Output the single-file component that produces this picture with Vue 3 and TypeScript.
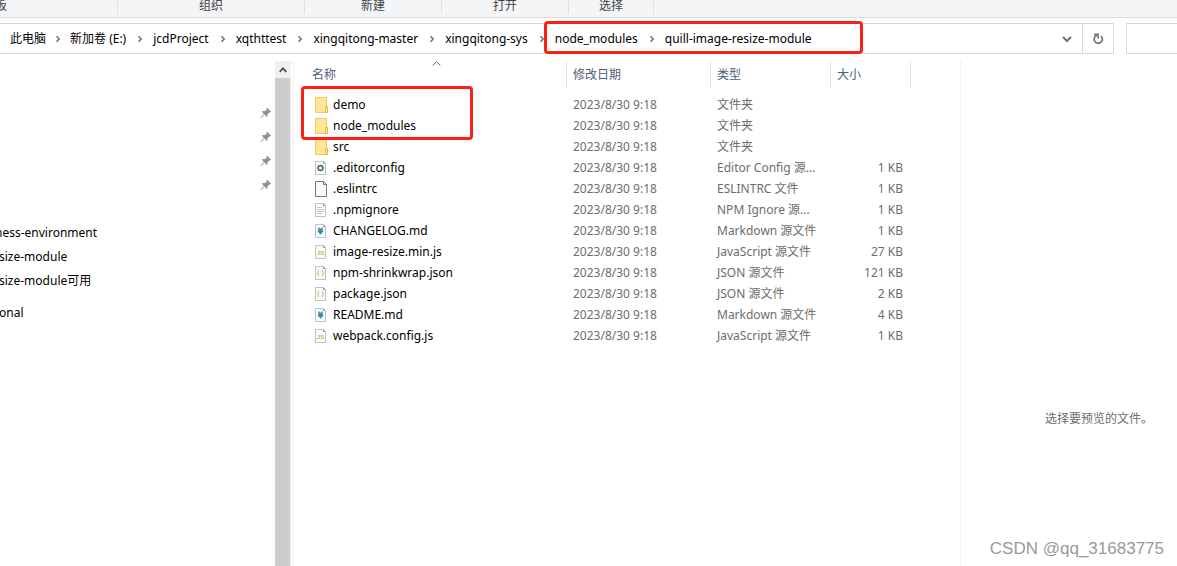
<script setup lang="ts">
type IconKind = 'folder' | 'gear' | 'blank' | 'text' | 'markdown' | 'js' | 'json'

interface FileEntry {
  name: string
  icon: IconKind
  modified: string
  type: string
  size: string
}

const ribbonGroups: string[] = ['板', '组织', '新建', '打开', '选择']

const crumbs: string[] = [
  '此电脑',
  '新加卷 (E:)',
  'jcdProject',
  'xqthttest',
  'xingqitong-master',
  'xingqitong-sys',
  'node_modules',
  'quill-image-resize-module',
]

const pinned: number[] = [1, 2, 3, 4]

const recent: { label: string; cut: string }[] = [
  { label: 'ness-environment', cut: 'cut-wide' },
  { label: 'size-module', cut: 'cut-narrow' },
  { label: 'size-module可用', cut: 'cut-narrow' },
  { label: 'onal', cut: 'cut-narrow spaced' },
]

const date = '2023/8/30 9:18'

const files: FileEntry[] = [
  { name: 'demo', icon: 'folder', modified: date, type: '文件夹', size: '' },
  { name: 'node_modules', icon: 'folder', modified: date, type: '文件夹', size: '' },
  { name: 'src', icon: 'folder', modified: date, type: '文件夹', size: '' },
  { name: '.editorconfig', icon: 'gear', modified: date, type: 'Editor Config 源...', size: '1 KB' },
  { name: '.eslintrc', icon: 'blank', modified: date, type: 'ESLINTRC 文件', size: '1 KB' },
  { name: '.npmignore', icon: 'text', modified: date, type: 'NPM Ignore 源...', size: '1 KB' },
  { name: 'CHANGELOG.md', icon: 'markdown', modified: date, type: 'Markdown 源文件', size: '1 KB' },
  { name: 'image-resize.min.js', icon: 'js', modified: date, type: 'JavaScript 源文件', size: '27 KB' },
  { name: 'npm-shrinkwrap.json', icon: 'json', modified: date, type: 'JSON 源文件', size: '121 KB' },
  { name: 'package.json', icon: 'json', modified: date, type: 'JSON 源文件', size: '2 KB' },
  { name: 'README.md', icon: 'markdown', modified: date, type: 'Markdown 源文件', size: '4 KB' },
  { name: 'webpack.config.js', icon: 'js', modified: date, type: 'JavaScript 源文件', size: '1 KB' },
]
</script>

<template>
  <div class="explorer">
    <div class="ribbon">
      <div v-for="(group, i) in ribbonGroups" :key="group" class="ribbon-group" :class="`group-${i}`">
        {{ group }}
      </div>
    </div>

    <div class="toolbar">
      <div class="address">
        <nav class="crumbs" aria-label="路径">
          <template v-for="(crumb, i) in crumbs" :key="crumb">
            <svg v-if="i > 0" class="crumb-sep" viewBox="0 0 6 8" aria-hidden="true">
              <path d="M1.5 1.3 4.2 4 1.5 6.7" fill="none" stroke="#6f6f6f" stroke-width="1.5" />
            </svg>
            <a href="#" class="crumb">{{ crumb }}</a>
          </template>
        </nav>
        <button class="tool drop" type="button" aria-label="历史位置">
          <svg width="10" height="8" viewBox="0 0 10 8">
            <path d="M1 2 5 6 9 2" fill="none" stroke="#707070" stroke-width="2" />
          </svg>
        </button>
        <button class="tool refresh" type="button" aria-label="刷新">
          <svg width="12" height="12" viewBox="0 0 12 12">
            <path d="M9 3.1A4.1 4.1 0 1 1 3.4 3.2L5.4 1.8" fill="none" stroke="#7a7a7a" stroke-width="1.8" />
            <path d="M2 1.4H6.2V5.4" fill="none" stroke="#7a7a7a" stroke-width="1.6" />
          </svg>
        </button>
      </div>
      <input class="search" type="text" aria-label="搜索" />
      <div class="mark mark-path"></div>
    </div>

    <div class="body">
      <aside class="sidebar">
        <div class="tree">
          <div class="pins">
            <svg v-for="pin in pinned" :key="pin" class="pin" viewBox="0 0 12 12" aria-hidden="true">
              <path
                d="M7.2.8 11.2 4.8 10.2 5.6 9.4 5.3 7.6 7.2C7.8 8.4 7.5 9.2 6.9 9.9L4.6 7.6 1 11.2.6 10.8 3.9 7 1.8 4.8C2.6 4.1 3.7 3.9 4.8 4.2L6.7 2.5 6.4 1.6Z"
                fill="#8794a0"
              />
            </svg>
          </div>
          <a v-for="item in recent" :key="item.label" href="#" class="node" :class="item.cut">{{ item.label }}</a>
        </div>
        <div class="scrollbar">
          <button class="scroll-up" type="button" aria-label="向上滚动">
            <svg width="8" height="8" viewBox="0 0 8 8">
              <path d="M.7 5.8 4 2.4 7.3 5.8" fill="none" stroke="#505050" stroke-width="1.8" />
            </svg>
          </button>
          <div class="thumb"></div>
        </div>
      </aside>

      <main class="listing">
        <table class="files">
          <colgroup>
            <col class="col-name" />
            <col class="col-date" />
            <col class="col-type" />
            <col class="col-size" />
          </colgroup>
          <thead>
            <tr>
              <th scope="col">
                名称
                <svg class="sort" viewBox="0 0 9 5" aria-hidden="true">
                  <path d="M.6 4.5 4.5.7 8.4 4.5" fill="none" stroke="#6a6a6a" />
                </svg>
              </th>
              <th scope="col">修改日期</th>
              <th scope="col">类型</th>
              <th scope="col">大小</th>
            </tr>
          </thead>
          <tbody>
            <tr v-for="file in files" :key="file.name">
              <td class="name">
                <div class="name-cell">
                  <svg class="icon" viewBox="0 0 14 16" aria-hidden="true">
                    <template v-if="file.icon === 'folder'">
                      <path d="M1.5.5H12.5V15.5H1.5Z" fill="#ffe594" stroke="#f0cb60" />
                      <path d="M11.5 9.5H13.5V15.5H11.5Z" fill="#ffe594" stroke="#e6b93f" />
                    </template>
                    <template v-else-if="file.icon === 'blank'">
                      <path d="M1.5.5H9.5L12.5 3.5V15.5H1.5Z" fill="#fafafa" stroke="#777" />
                      <path d="M9.5.5V3.5H12.5" fill="none" stroke="#777" />
                    </template>
                    <template v-else>
                      <path d="M1.5 1.5H9.5L11.5 3.5V14.5H1.5Z" fill="#fafbfb" stroke="#bcc3c6" />
                      <path d="M9 1V4H12Z" fill="#9faaae" />
                      <template v-if="file.icon === 'gear'">
                        <circle cx="6.5" cy="8" r="2.3" fill="none" stroke="#536a75" stroke-width="1.5" />
                        <path
                          d="M6.5 4.4V5.6M6.5 10.4V11.6M2.9 8H4.1M8.9 8H10.1M3.9 5.4 4.8 6.3M8.2 9.7 9.1 10.6M3.9 10.6 4.8 9.7M8.2 6.3 9.1 5.4"
                          stroke="#536a75"
                          stroke-width="1.2"
                        />
                      </template>
                      <path
                        v-else-if="file.icon === 'text'"
                        d="M3 5.5H8M3 7.5H10M3 9.5H10M3 11.5H8"
                        stroke="#c4cacd"
                      />
                      <path
                        v-else-if="file.icon === 'markdown'"
                        d="M4.2 4.6H5.5V5.4H7.5V4.6H8.8V8H9.8L6.5 11.8 3.2 8H4.2Z"
                        fill="#428ba8"
                      />
                      <text v-else-if="file.icon === 'js'" x="6.5" y="10.5" class="glyph">JS</text>
                      <g v-else fill="none" stroke="#c9ca5c" stroke-width="1.2">
                        <path d="M5 5.3Q4.2 5.3 4.2 6.4T3.2 8Q4.2 8 4.2 9.3T5 10.7" />
                        <path d="M8 5.3Q8.8 5.3 8.8 6.4T9.8 8Q8.8 8 8.8 9.3T8 10.7" />
                      </g>
                    </template>
                  </svg>
                  <span>{{ file.name }}</span>
                </div>
              </td>
              <td>{{ file.modified }}</td>
              <td>{{ file.type }}</td>
              <td class="size">{{ file.size }}</td>
            </tr>
          </tbody>
        </table>
        <div class="mark mark-folders"></div>
      </main>

      <section class="preview">
        <p>选择要预览的文件。</p>
        <div class="watermark">CSDN @qq_31683775</div>
      </section>
    </div>
  </div>
</template>

<style>
body {
  margin: 0;
}
</style>

<style scoped>
.explorer {
  display: flex;
  flex-direction: column;
  height: 100vh;
  overflow: hidden;
  background: #fff;
  color: #000;
  font-family: "Noto Sans", "Noto Sans CJK SC", sans-serif;
  font-size: 12px;
  line-height: 16px;
}

.explorer * {
  box-sizing: border-box;
}

a {
  color: inherit;
  text-decoration: none;
}

button {
  padding: 0;
  border: 0;
  background: none;
}

.ribbon {
  display: flex;
  flex: none;
  height: 18px;
  background: #f4f5f7;
  border-bottom: 1px solid #d9dadb;
}

.ribbon-group {
  height: 14px;
  border-right: 1px solid #e0e1e3;
  color: #444;
  line-height: 12px;
  text-align: center;
}

.group-0 {
  width: 118px;
  text-align: left;
  text-indent: -5px;
}

.group-1 {
  width: 187px;
}

.group-2 {
  width: 137px;
}

.group-3 {
  width: 127px;
}

.group-4 {
  width: 85px;
}

.toolbar {
  position: relative;
  display: flex;
  flex: none;
  gap: 12px;
  padding: 5px 0 7px;
}

.address {
  display: flex;
  flex: 1;
  height: 31px;
  border: 1px solid #d9d9d9;
  border-left: 0;
}

.crumbs {
  display: flex;
  flex: 1;
  align-items: center;
  padding-left: 10px;
  white-space: nowrap;
}

.crumb-sep {
  width: 6px;
  height: 8px;
  margin: 0 10px 0 11px;
}

.crumb:first-child + .crumb-sep {
  margin: 0 9px;
}

.tool {
  display: flex;
  align-items: center;
  justify-content: center;
  width: 30px;
}

.refresh {
  width: 31px;
  border-left: 1px solid #d9d9d9;
}

.search {
  width: 51px;
  height: 31px;
  padding: 0 8px;
  border: 1px solid #d9d9d9;
  border-right: 0;
  background: #fff;
  font: inherit;
}

.mark {
  position: absolute;
  border: 3px solid #fc2014;
  border-radius: 4px;
  pointer-events: none;
}

.mark-path {
  top: 3px;
  left: 544px;
  width: 319px;
  height: 33px;
}

.mark-folders {
  top: 25px;
  left: 7px;
  width: 172px;
  height: 54px;
}

.body {
  display: flex;
  flex: 1;
  min-height: 0;
}

.sidebar {
  display: flex;
  flex: none;
  width: 291px;
  overflow: hidden;
}

.tree {
  display: flex;
  flex: 1;
  flex-direction: column;
  overflow: hidden;
  padding-top: 40px;
}

.pins {
  display: flex;
  flex-direction: column;
  align-items: flex-end;
  margin-bottom: 24px;
  padding-right: 3px;
}

.pin {
  width: 12px;
  height: 12px;
  margin: 6px 0;
}

.node {
  height: 24px;
  line-height: 24px;
  white-space: nowrap;
}

.cut-wide {
  margin-left: -5px;
}

.cut-narrow {
  margin-left: -1px;
}

.spaced {
  margin-top: 8px;
}

.scrollbar {
  display: flex;
  flex-direction: column;
  width: 16px;
  background: #f0f0f0;
}

.scroll-up {
  display: flex;
  align-items: center;
  justify-content: center;
  height: 17px;
}

.thumb {
  flex: 1;
  width: 15px;
  background: #cdcdcd;
}

.listing {
  position: relative;
  flex: 1;
  margin-left: 2px;
  border-left: 1px solid #f2f2f2;
}

.files {
  width: 617px;
  border-collapse: separate;
  border-spacing: 0;
  table-layout: fixed;
}

.col-name {
  width: 273px;
}

.col-date {
  width: 144px;
}

.col-type {
  width: 120px;
}

.col-size {
  width: 80px;
}

th {
  position: relative;
  height: 27px;
  padding: 0 0 0 6px;
  border-right: 1px solid #e2e2e2;
  color: #4c607a;
  font-weight: 400;
  text-align: left;
}

th:first-child {
  padding-left: 18px;
}

.sort {
  position: absolute;
  top: 0;
  left: 138px;
  width: 9px;
  height: 5px;
}

tbody::before {
  display: block;
  height: 6px;
  content: "";
}

td {
  height: 21px;
  padding: 0 0 0 6px;
  color: #6d6d6d;
  white-space: nowrap;
}

td.name {
  padding-left: 20px;
  color: #000;
}

td.size {
  padding-right: 8px;
  text-align: right;
}

.name-cell {
  display: flex;
  align-items: center;
  gap: 5px;
}

.icon {
  width: 14px;
  height: 16px;
}

.glyph {
  fill: #bcbd45;
  font-family: "Liberation Sans", sans-serif;
  font-size: 6px;
  font-weight: 700;
  text-anchor: middle;
}

.preview {
  display: flex;
  flex: none;
  flex-direction: column;
  justify-content: space-between;
  width: 217px;
  padding: 350px 13px 7px 0;
  border-left: 1px solid #f2f2f2;
}

.preview p {
  margin: 0 0 0 84px;
  color: #6d6d6d;
  white-space: nowrap;
}

.watermark {
  color: #999;
  font-family: "Liberation Sans", Arial, sans-serif;
  font-size: 17px;
  line-height: 20px;
  text-align: right;
  white-space: nowrap;
}
</style>
